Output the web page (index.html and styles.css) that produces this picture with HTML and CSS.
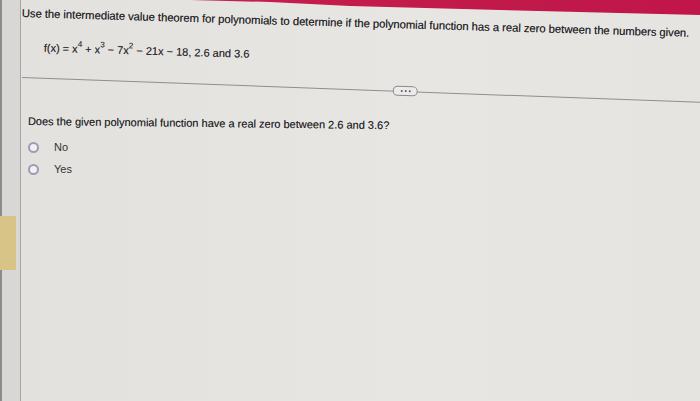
FILE: index.html
```html
<!DOCTYPE html>
<html>
<head>
<meta charset="utf-8">
<link rel="stylesheet" href="styles.css">
</head>
<body>
<div class="frame">
  <div class="redbar"></div>
  <aside class="rail">
    <div class="marker"></div>
  </aside>
  <main class="main">
    <div class="header">
      <p class="prompt">Use the intermediate value theorem for polynomials to determine if the polynomial function has a real zero between the numbers given.</p>
      <p class="formula">f(x) = x<sup>4</sup> + x<sup>3</sup> − 7x<sup>2</sup> − 21x − 18, 2.6 and 3.6</p>
    </div>
    <div class="divider">
      <span class="pill"><i></i><i></i><i></i></span>
    </div>
    <p class="question">Does the given polynomial function have a real zero between 2.6 and 3.6?</p>
    <ul class="options">
      <li class="option"><span class="radio"></span><span>No</span></li>
      <li class="option"><span class="radio"></span><span>Yes</span></li>
    </ul>
  </main>
</div>
</body>
</html>
```
FILE: styles.css
```css
* { box-sizing: border-box; }
html, body { margin: 0; padding: 0; }
body {
  width: 700px;
  height: 401px;
  overflow: hidden;
  background: #e4e2df;
  font-family: "Liberation Sans", Arial, sans-serif;
  color: #2b2b2e;
}
.frame {
  position: relative;
  display: flex;
  width: 700px;
  height: 401px;
  background: linear-gradient(90deg, #e3e1de 0%, #e8e6e3 60%, #e6e4e1 100%);
}
.redbar {
  position: absolute;
  top: 0;
  left: 0;
  width: 700px;
  height: 16px;
  background: linear-gradient(90deg, #c8325a 0%, #c41c4c 40%, #c0164a 100%);
  clip-path: polygon(190px 0, 700px 0, 700px 15px, 500px 10px, 350px 6px, 270px 2px);
}
.rail {
  width: 21px;
  flex: none;
  border-left: 2px solid #8c8b8c;
  border-right: 1px solid #a5a4a6;
  background: #d9d7d5;
  padding-top: 216px;
}
.marker {
  width: 16px;
  height: 54px;
  margin-left: -2px;
  background: #d8c487;
}
.main {
  flex: 1;
  padding: 7px 0 0 1px;
}
.header {
  transform: rotate(1.7deg);
  transform-origin: 0 0;
}
.prompt {
  margin: 0;
  font-size: 11.3px;
  line-height: 13px;
  letter-spacing: -0.05px;
  white-space: nowrap;
  color: #252528;
  text-shadow: 0 0 0.4px rgba(30, 30, 34, 0.6);
}
.formula {
  margin: 21px 0 0 23px;
  font-size: 11px;
  line-height: 13px;
  color: #2b2b2f;
  text-shadow: 0 0 0.4px rgba(30, 30, 34, 0.5);
}
.formula sup {
  font-size: 8px;
  vertical-align: 6px;
  line-height: 0;
}
.divider {
  position: relative;
  margin-top: 23px;
  width: 700px;
  height: 1px;
  background: #8f8e90;
  transform: rotate(2.1deg);
  transform-origin: 0 0;
}
.pill {
  position: absolute;
  left: 371px;
  top: -5px;
  width: 25px;
  height: 10px;
  border: 1px solid #8a898c;
  border-radius: 5px;
  background: #ecebe9;
  display: flex;
  align-items: center;
  justify-content: center;
  gap: 2px;
}
.pill i {
  width: 2px;
  height: 2px;
  border-radius: 50%;
  background: #5d5c60;
}
.question {
  margin: 37px 0 0 6px;
  font-size: 11px;
  line-height: 13px;
  white-space: nowrap;
  color: #242428;
  text-shadow: 0 0 0.4px rgba(30, 30, 34, 0.5);
  transform: rotate(0.65deg);
  transform-origin: 0 0;
}
.options {
  list-style: none;
  margin: 13px 0 0 6px;
  padding: 0;
  display: flex;
  flex-direction: column;
  gap: 9px;
}
.option {
  display: flex;
  align-items: center;
  gap: 15px;
  font-size: 11px;
  line-height: 13px;
  color: #333338;
}
.radio {
  width: 11px;
  height: 11px;
  border-radius: 50%;
  border: 2px solid #9e9bb5;
  background: #f1f0f2;
}
```
